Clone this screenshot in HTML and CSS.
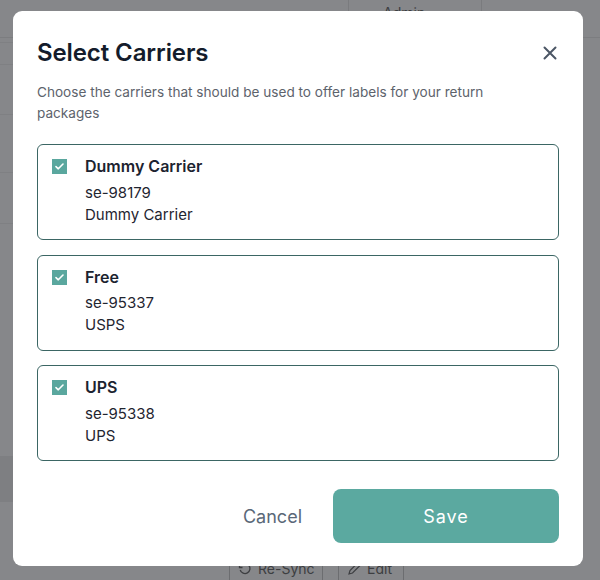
FILE: index.html
```html
<!DOCTYPE html>
<html>
<head>
<meta charset="utf-8">
<link rel="stylesheet" href="styles.css">
</head>
<body>
<div class="page">
  <div class="topbar">
    <div class="topbar-left"></div>
    <div class="admin">Admin ⌄⌄</div>
    <div class="topbar-right"></div>
  </div>
  <div class="rows">
    <div class="row r1"></div>
    <div class="row r2"></div>
    <div class="row r3"></div>
    <div class="row r4"></div>
    <div class="row r5"></div>
    <div class="band"></div>
  </div>
  <div class="actions">
    <span class="pbtn resync"><svg width="14" height="14" viewBox="0 0 14 14"><path d="M3 3.5A5 5 0 1 1 2.2 8" fill="none" stroke="#3d3e41" stroke-width="1.3"/><path d="M1.5 2.5v3h3" fill="none" stroke="#3d3e41" stroke-width="1.3"/></svg>Re-Sync</span>
    <span class="pbtn edit"><svg width="14" height="14" viewBox="0 0 14 14"><path d="M2 12l1-3.5L10 1.5l2.5 2.5-7 7z" fill="none" stroke="#3d3e41" stroke-width="1.2"/></svg>Edit</span>
  </div>
</div>

<div class="modal" role="dialog">
  <div class="modal-head">
    <h1 class="modal-title">Select Carriers</h1>
    <button class="close" aria-label="Close">
      <svg width="14" height="14" viewBox="0 0 14 14"><path d="M1.5 1.5l11 11M12.5 1.5l-11 11" stroke="#4b5665" stroke-width="2" stroke-linecap="round"/></svg>
    </button>
  </div>
  <p class="modal-desc">Choose the carriers that should be used to offer labels for your return packages</p>

  <div class="cards">
    <label class="card">
      <span class="check"><svg width="9" height="7" viewBox="0 0 9 7"><path d="M1 3.6l2.3 2.2L8 1" fill="none" stroke="#fff" stroke-width="1.6" stroke-linecap="round" stroke-linejoin="round"/></svg></span>
      <span class="card-body">
        <span class="card-name">Dummy Carrier</span>
        <span class="card-line">se-98179</span>
        <span class="card-line">Dummy Carrier</span>
      </span>
    </label>
    <label class="card">
      <span class="check"><svg width="9" height="7" viewBox="0 0 9 7"><path d="M1 3.6l2.3 2.2L8 1" fill="none" stroke="#fff" stroke-width="1.6" stroke-linecap="round" stroke-linejoin="round"/></svg></span>
      <span class="card-body">
        <span class="card-name">Free</span>
        <span class="card-line">se-95337</span>
        <span class="card-line">USPS</span>
      </span>
    </label>
    <label class="card">
      <span class="check"><svg width="9" height="7" viewBox="0 0 9 7"><path d="M1 3.6l2.3 2.2L8 1" fill="none" stroke="#fff" stroke-width="1.6" stroke-linecap="round" stroke-linejoin="round"/></svg></span>
      <span class="card-body">
        <span class="card-name">UPS</span>
        <span class="card-line">se-95338</span>
        <span class="card-line">UPS</span>
      </span>
    </label>
  </div>

  <div class="modal-foot">
    <button class="btn-cancel">Cancel</button>
    <button class="btn-save">Save</button>
  </div>
</div>
</body>
</html>
```

FILE: styles.css
```css
* { box-sizing: border-box; }
html, body { margin: 0; padding: 0; }
body {
  width: 600px;
  height: 580px;
  overflow: hidden;
  background: #86878a;
  font-family: Inter, "Noto Sans", sans-serif;
}

/* backdrop page */
.page { width: 600px; height: 580px; display: flex; flex-direction: column; }
.topbar { display: flex; height: 38px; border-bottom: 1px solid #7c7d80; }
.topbar-left { width: 348px; }
.admin {
  width: 134px;
  border-left: 1px solid #7a7b7e;
  border-right: 1px solid #7a7b7e;
  color: #3d3e41;
  font-size: 14px;
  padding: 4px 0 0 34px;
}
.topbar-right { flex: 1; }
.rows { flex: 1; display: flex; flex-direction: column; }
.row { border-bottom: 1px solid #7f8083; width: 13px; }
.r1 { height: 5px; }
.r2 { height: 22px; }
.r3 { height: 50px; }
.r4 { height: 58px; }
.r5 { height: 51px; }
.band { margin-top: 232px; height: 46px; width: 13px; background: #7e7f82; }
.actions { height: 25px; display: flex; gap: 15px; padding-left: 229px; }
.pbtn {
  display: flex; align-items: flex-start; gap: 6px;
  height: 32px;
  border: 1px solid #6c6d70;
  border-radius: 4px;
  padding: 4px 8px 0 8px;
  color: #3d3e41;
  font-size: 14px;
  white-space: nowrap;
}
.pbtn svg { margin-top: 2px; flex-shrink: 0; }
.resync { width: 94px; }
.edit { width: 66px; }

/* modal */
.modal {
  position: fixed;
  top: 11px;
  left: 13px;
  width: 570px;
  height: 555px;
  background: #fff;
  border-radius: 9px;
  padding: 26px 24px 23px 24px;
  display: flex;
  flex-direction: column;
}
.modal-head { display: flex; justify-content: space-between; align-items: center; height: 32px; }
.modal-title {
  margin: 0;
  font-size: 24px;
  line-height: 32px;
  font-weight: 600;
  color: #141c2b;
  letter-spacing: -0.1px;
}
.close {
  border: 0; background: none; padding: 0;
  width: 14px; height: 14px;
  margin-right: 2px;
  display: flex;
}
.modal-desc {
  margin: 13px 0 0 0;
  font-size: 13.6px;
  line-height: 21px;
  color: #5d636c;
  max-width: 460px;
}
.cards { display: flex; flex-direction: column; gap: 14.5px; margin-top: 20px; }
.card {
  display: flex;
  gap: 18px;
  height: 96px;
  border: 1px solid #3b6664;
  border-radius: 6px;
  padding: 10px 14px 0 14px;
}
.check {
  width: 15px; height: 15px;
  margin-top: 4px;
  background: #5aa79e;
  display: flex; align-items: center; justify-content: center;
  flex-shrink: 0;
}
.card-body { display: flex; flex-direction: column; }
.card-name {
  font-size: 16px; line-height: 22px; font-weight: 600; color: #1c2330;
  margin-bottom: 4.5px;
}
.card-line { font-size: 15px; line-height: 22px; color: #1f2530; }

.modal-foot {
  margin-top: auto;
  display: flex;
  justify-content: flex-end;
  align-items: center;
  gap: 31px;
}
.btn-cancel {
  border: 0; background: none; padding: 0;
  font-family: inherit;
  font-size: 18px;
  color: #5a6878;
}
.btn-save {
  width: 226px;
  height: 54px;
  border: 0;
  border-radius: 8px;
  background: #5ba9a0;
  color: #fff;
  font-family: inherit;
  font-size: 18px;
  letter-spacing: 1px;
}
```
